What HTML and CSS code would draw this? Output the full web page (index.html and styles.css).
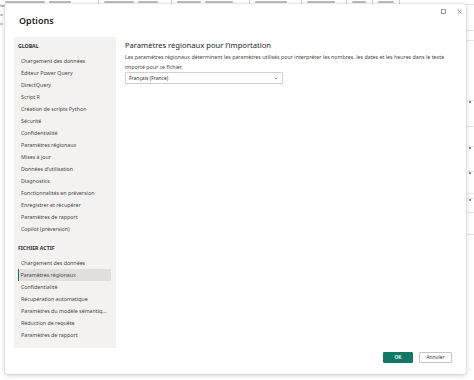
FILE: index.html
```html
<!DOCTYPE html>
<html lang="fr">
<head>
<meta charset="utf-8">
<title>Options</title>
<link rel="stylesheet" href="styles.css">
</head>
<body>
<div class="app">
  <div class="app-head">
    <div class="hcell" style="width:99px"><i class="blur" style="width:40px"></i><i class="blur" style="width:22px"></i></div>
    <div class="hcell" style="width:73px"><i class="blur" style="width:30px"></i><i class="blur" style="width:20px"></i></div>
    <div class="hcell" style="width:78px"><i class="blur" style="width:24px"></i><i class="blur" style="width:28px"></i></div>
    <div class="hcell" style="width:52px"><i class="blur" style="width:32px"></i></div>
    <div class="hcell" style="width:45px"><i class="blur" style="width:28px"></i></div>
    <div class="hcell" style="width:26px"><i class="blur" style="width:14px"></i></div>
    <div class="hcell" style="width:27px"><i class="blur" style="width:16px"></i></div>
    <div class="hcell hcell-last"></div>
  </div>
  <div class="app-body">
    <div class="app-left">
      <i class="blur" style="width:5px"></i><i class="blur" style="width:3px"></i><i class="blur" style="width:3px"></i>
    </div>
    <div class="app-mid"></div>
    <div class="app-right">
      <div class="rrow" style="height:26px"></div>
      <div class="rrow" style="height:10px"></div>
      <div class="rrow" style="height:60px"></div>
      <div class="rrow" style="height:26px"><i class="dot"></i></div>
      <div class="rrow" style="height:20px"></div>
      <div class="rrow" style="height:25px"><i class="dot"></i></div>
      <div class="rrow" style="height:22px"><i class="dot"></i></div>
      <div class="rrow" style="height:5px"></div>
      <div class="rrow" style="height:14px"><i class="dot"></i></div>
      <div class="rrow" style="height:22px"></div>
    </div>
  </div>
</div>

<div class="dialog">
  <div class="win-controls">
    <svg width="6" height="6" viewBox="0 0 6 6"><rect x="0.5" y="0.5" width="4" height="4" fill="none" stroke="#8a8886" stroke-width="0.8"/></svg>
    <svg width="6" height="6" viewBox="0 0 6 6"><path d="M0.6 0.6 L4.6 4.6 M4.6 0.6 L0.6 4.6" stroke="#8a8886" stroke-width="0.8"/></svg>
  </div>
  <div class="dlg-header"><h1 class="dlg-title">Options</h1></div>
  <div class="dlg-main">
    <nav class="nav">
      <div class="nav-group">GLOBAL</div>
      <div class="nav-item">Chargement des données</div>
      <div class="nav-item">Éditeur Power Query</div>
      <div class="nav-item">DirectQuery</div>
      <div class="nav-item">Script R</div>
      <div class="nav-item">Création de scripts Python</div>
      <div class="nav-item">Sécurité</div>
      <div class="nav-item">Confidentialité</div>
      <div class="nav-item">Paramètres régionaux</div>
      <div class="nav-item">Mises à jour</div>
      <div class="nav-item">Données d’utilisation</div>
      <div class="nav-item">Diagnostics</div>
      <div class="nav-item">Fonctionnalités en préversion</div>
      <div class="nav-item">Enregistrer et récupérer</div>
      <div class="nav-item">Paramètres de rapport</div>
      <div class="nav-item">Copilot (préversion)</div>
      <div class="nav-group nav-group-2">FICHIER ACTIF</div>
      <div class="nav-item">Chargement des données</div>
      <div class="nav-item is-selected">Paramètres régionaux</div>
      <div class="nav-item">Confidentialité</div>
      <div class="nav-item">Récupération automatique</div>
      <div class="nav-item">Paramètres du modèle sémantiq...</div>
      <div class="nav-item">Réduction de requête</div>
      <div class="nav-item">Paramètres de rapport</div>
    </nav>
    <section class="content">
      <h2 class="content-title">Paramètres régionaux pour l’importation</h2>
      <p class="content-desc">Les paramètres régionaux déterminent les paramètres utilisés pour interpréter les nombres, les dates et les heures dans le texte importé pour ce fichier.</p>
      <div class="select">
        <span>Français (France)</span>
        <svg width="4" height="3" viewBox="0 0 4 3"><path d="M0.6 0.7 L2 2 L3.4 0.7" fill="none" stroke="#605e5c" stroke-width="0.7"/></svg>
      </div>
    </section>
  </div>
  <div class="dlg-footer">
    <button class="btn btn-primary">OK</button>
    <button class="btn btn-secondary">Annuler</button>
  </div>
</div>
</body>
</html>
```

FILE: styles.css
```css
* { box-sizing: border-box; }
html, body { margin: 0; padding: 0; }
body {
  width: 474px;
  height: 380px;
  overflow: hidden;
  background: #ffffff;
  font-family: "Noto Sans", "Open Sans", sans-serif;
  color: #323130;
  position: relative;
}

/* background app (blurred, behind the dialog) */
.app { width: 474px; height: 380px; display: flex; flex-direction: column; }
.app-head {
  display: flex;
  height: 5px;
  overflow: hidden;
  border-bottom: 1px solid #e8e6e4;
}
.hcell {
  display: flex;
  gap: 4px;
  align-items: flex-start;
  padding: 1px 0 0 5px;
  border-right: 1px solid #d2d0ce;
}
.hcell-last { flex: 1; border-right: 0; }
.blur {
  display: block;
  height: 2px;
  background: #a19f9d;
  opacity: 0.7;
  border-radius: 1px;
}
.app-body { flex: 1; display: flex; }
.app-left {
  width: 6px;
  display: flex;
  flex-direction: column;
  gap: 7px;
  padding-top: 0;
}
.app-mid { flex: 1; }
.app-right {
  width: 7px;
  display: flex;
  flex-direction: column;
}
.rrow {
  border-bottom: 1px solid #e8e6e4;
}
.dot {
  display: block;
  width: 2px;
  height: 2px;
  background: #8a8886;
  margin: 0 0 0 2px;
}

/* dialog */
.dialog {
  position: absolute;
  left: 5px;
  top: 4px;
  width: 461px;
  height: 370px;
  background: #ffffff;
  border-radius: 2px;
  box-shadow: 0 0 1px rgba(0,0,0,0.25), 0 1px 5px rgba(0,0,0,0.22);
  display: flex;
  flex-direction: column;
  padding: 0 14px 0 9px;
}
.win-controls {
  position: absolute;
  top: 5px;
  right: 3px;
  display: flex;
  gap: 10px;
}
.dlg-header {
  height: 33px;
  padding: 10px 0 0 5px;
}
.dlg-title {
  margin: 0;
  font-size: 9px;
  line-height: 13px;
  font-weight: 600;
  color: #252423;
}
.dlg-main {
  display: flex;
  gap: 9px;
  height: 311px;
}
.nav {
  width: 102px;
  background: #f3f2f1;
  padding: 3px 5px 0 4px;
  display: flex;
  flex-direction: column;
}
.nav-group {
  height: 12px;
  line-height: 12px;
  font-size: 5.2px;
  font-weight: 700;
  color: #323130;
  margin-bottom: 3px;
}
.nav-group-2 { margin-top: 6.5px; }
.nav-item {
  height: 12px;
  line-height: 12px;
  font-size: 5.3px;
  color: #484644;
  padding-left: 3px;
  white-space: nowrap;
  overflow: hidden;
}
.nav-item.is-selected {
  background: #e1dfdd;
  border-left: 1.5px solid #117865;
  padding-left: 1.5px;
}
.content {
  flex: 1;
  padding-top: 3px;
}
.content-title {
  margin: 0;
  font-size: 7.6px;
  line-height: 10px;
  font-weight: 400;
  color: #252423;
}
.content-desc {
  margin: 2px 0 0 0;
  width: 322px;
  font-size: 5.3px;
  line-height: 10px;
  color: #484644;
}
.select {
  margin-top: 0;
  width: 158px;
  height: 12px;
  border: 1px solid #d2d0ce;
  border-radius: 1px;
  display: flex;
  align-items: center;
  justify-content: space-between;
  padding: 0 4px 0 3px;
  font-size: 5px;
  color: #323130;
}
.dlg-footer {
  display: flex;
  justify-content: flex-end;
  gap: 6px;
  padding-top: 4px;
}
.btn {
  height: 11px;
  padding: 0;
  font-family: "Noto Sans", "Open Sans", sans-serif;
  font-size: 4.8px;
  line-height: 9px;
  border-radius: 1px;
  cursor: pointer;
}
.btn-primary {
  width: 30px;
  background: #117865;
  border: 1px solid #117865;
  color: #ffffff;
  font-weight: 600;
}
.btn-secondary {
  width: 33px;
  background: #ffffff;
  border: 1px solid #c8c6c4;
  color: #323130;
}
```
